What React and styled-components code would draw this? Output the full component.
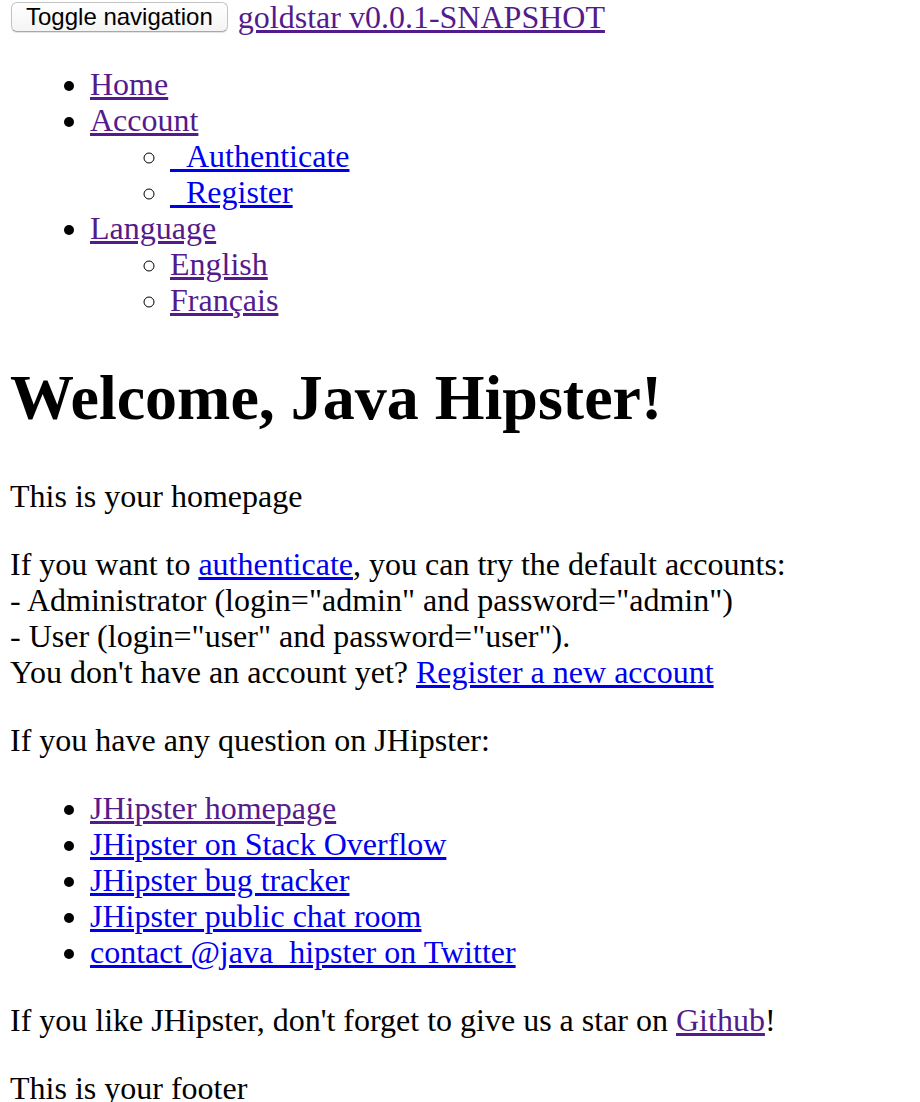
import React from "react";
import styled, { createGlobalStyle } from "styled-components";

const GlobalStyle = createGlobalStyle`
  body {
    margin: 0 10px;
    background: #fff;
    color: #000;
    font-family: "Liberation Serif", "Times New Roman", serif;
    font-size: 32px;
    line-height: 36px;
  }
`;

const accountLinks = [
    { name: "Authenticate", visited: false },
    { name: "Register", visited: false },
];

const languages = ["English", "Français"];

const hipsterLinks = [
    { name: "JHipster homepage", visited: true },
    { name: "JHipster on Stack Overflow", visited: false },
    { name: "JHipster bug tracker", visited: false },
    { name: "JHipster public chat room", visited: false },
    { name: "contact @java_hipster on Twitter", visited: false },
];

const Navbar = () => {
    return (
        <NavHeader>
            <ToggleButton type="button">Toggle navigation</ToggleButton>
            <Link visited>goldstar v0.0.1-SNAPSHOT</Link>
        </NavHeader>
    );
};

const Menu = () => {
    return (
        <List>
            <li><Link visited>Home</Link></li>
            <li>
                <Link visited>Account</Link>
                <SubList>
                    {accountLinks.map((link, index) => (
                        <li key={index}>
                            <Link visited={link.visited}>{"\u00a0\u00a0"}{link.name}</Link>
                        </li>
                    ))}
                </SubList>
            </li>
            <li>
                <Link visited>Language</Link>
                <SubList>
                    {languages.map((lang) => (
                        <li key={lang}><Link visited>{lang}</Link></li>
                    ))}
                </SubList>
            </li>
        </List>
    );
};

const App = () => {
    return (
        <>
            <GlobalStyle />
            <Navbar />
            <Menu />
            <Title>Welcome, Java Hipster!</Title>
            <Para>This is your homepage</Para>
            <Para>
                If you want to <Link>authenticate</Link>, you can try the default accounts:
                <br />- Administrator (login="admin" and password="admin")
                <br />- User (login="user" and password="user").
                <br />You don't have an account yet? <Link>Register a new account</Link>
            </Para>
            <Para>If you have any question on JHipster:</Para>
            <List>
                {hipsterLinks.map((link, index) => (
                    <li key={index}>
                        <Link visited={link.visited}>{link.name}</Link>
                    </li>
                ))}
            </List>
            <Para>
                If you like JHipster, don't forget to give us a star on <Link visited>Github</Link>!
            </Para>
            <Para>This is your footer</Para>
        </>
    );
};

const NavHeader = styled.div`
display: flex;
align-items: center;
gap: 10px;
height: 34px;
padding-left: 1px;
`;

const ToggleButton = styled.button`
font-family: "Liberation Sans", Arial, sans-serif;
font-size: 24px;
line-height: 28px;
height: 30px;
padding: 0 14px;
margin-top: 0;
color: #000;
background: linear-gradient(#ffffff, #f4f4f4);
border: 1px solid #c4c4c4;
border-bottom-color: #a8a8a8;
border-radius: 6px;
box-shadow: 0 1px 1px rgba(0, 0, 0, 0.12);
`;

const Link = styled.a.attrs({ href: "#" })`
color: ${(p) => (p.visited ? "#551a8b" : "#0000ee")};
text-decoration: underline;
`;

const List = styled.ul`
margin: 32px 0;
padding-left: 80px;
list-style: disc;
`;

const SubList = styled.ul`
margin: 0;
padding-left: 80px;
list-style: circle;
`;

const Title = styled.h1`
font-size: 64px;
line-height: 74px;
font-weight: bold;
margin: 43px 0;
`;

const Para = styled.p`
margin: 32px 0;
`;

export default App;
